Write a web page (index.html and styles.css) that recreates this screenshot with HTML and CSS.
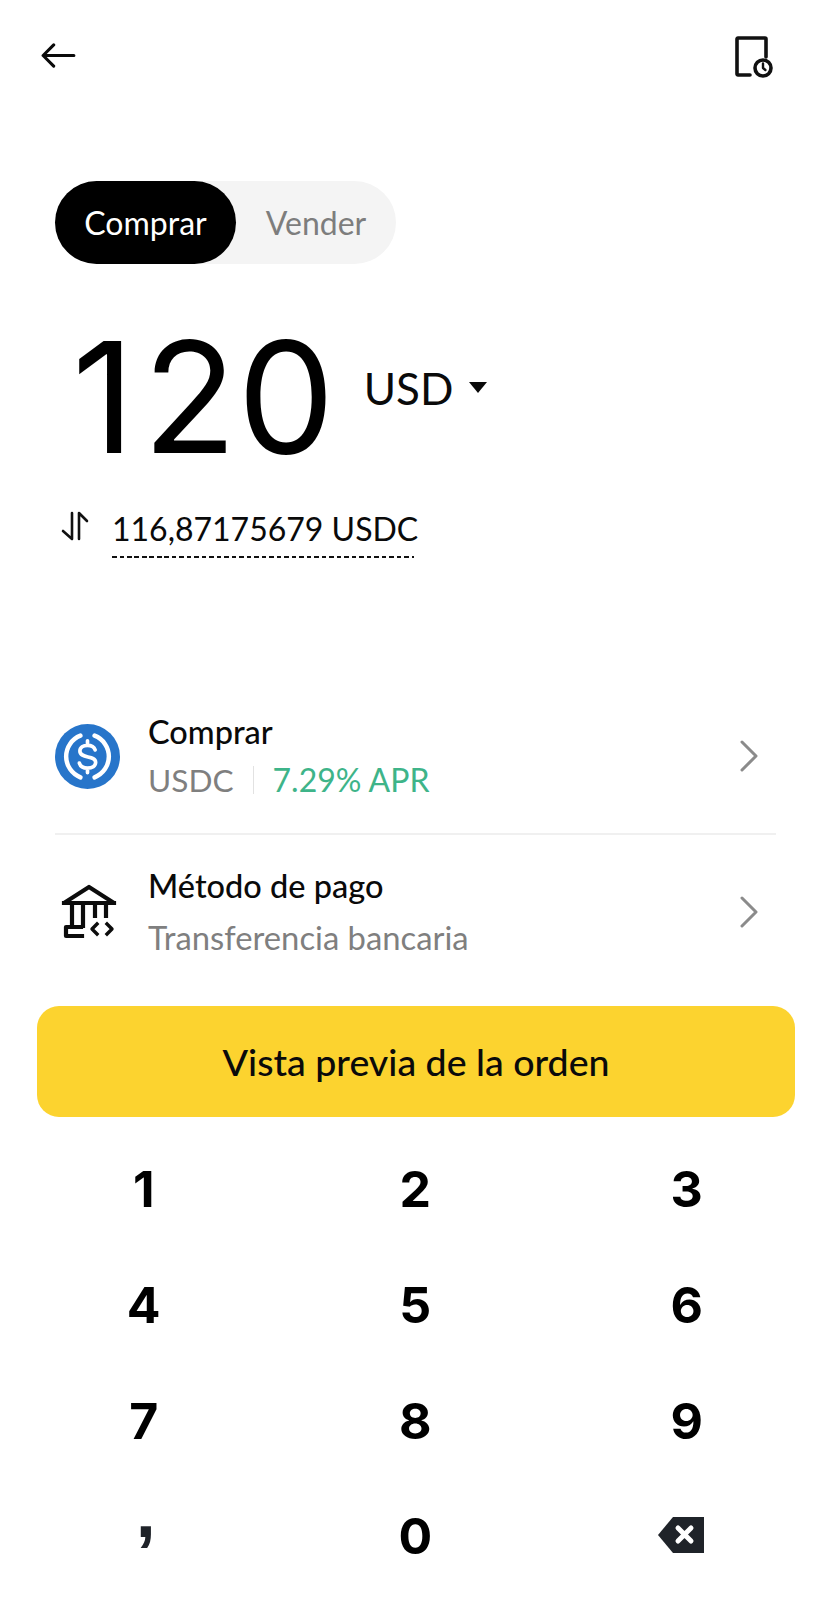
FILE: index.html
```html
<!DOCTYPE html>
<html lang="es">
<head>
<meta charset="utf-8">
<title>Comprar</title>
<link rel="stylesheet" href="styles.css">
</head>
<body>
<main class="screen">
  <header class="top">
    <svg class="back" viewBox="0 0 36 26" fill="none" stroke="#0a0a0a" stroke-width="3.2" stroke-linecap="round" stroke-linejoin="round"><path d="M34 13H2M13 2 2 13l11 11"/></svg>
    <svg class="history" viewBox="0 0 38 42" fill="none" stroke="#111" stroke-width="3.6" stroke-linecap="round" stroke-linejoin="round"><path d="M15 39H3a1 1 0 0 1-1-1V3a1 1 0 0 1 1-1h27a1 1 0 0 1 1 1v18"/><circle cx="28" cy="32" r="8"/><path d="M28 27.500V32l2.400 2" stroke-width="2.400"/></svg>
  </header>

  <div class="toggle">
    <span class="tab tab-on">Comprar</span>
    <span class="tab tab-off">Vender</span>
  </div>

  <div class="amount">
    <span class="value">1<span class="value-rest">20</span></span>
    <span class="currency">USD</span>
    <span class="caret"></span>
  </div>

  <div class="convert">
    <svg class="swap" viewBox="0 0 28 30" fill="none" stroke="#111" stroke-width="2.600" stroke-linecap="round" stroke-linejoin="round"><path d="M11 2v26M2 20l9 8M18 28V2l8 8"/></svg>
    <div class="conv-text">
      <span class="converted">116,87175679 USDC</span>
      <i class="dash"></i>
    </div>
  </div>

  <section class="rows">
    <div class="row row-first">
      <svg class="coin" viewBox="0 0 64 64"><circle cx="32" cy="32" r="32" fill="#2775ca"/><g fill="none" stroke="#fff" stroke-linecap="round"><path d="M25 11.500a22 22 0 0 0 0 41M39 11.500a22 22 0 0 1 0 41" stroke-width="4.400"/><path d="M39.500 25.500c-1-3-4-4.500-7.500-4.500-4 0-7.500 2-7.500 5.700 0 8 15.500 3.500 15.500 11 0 3.800-3.500 5.800-8 5.800-4 0-7-1.800-8-5M32 16.500V21M32 43.500V48" stroke-width="3.600"/></g></svg>
      <div class="info">
        <div class="title">Comprar</div>
        <div class="sub"><span>USDC</span><i class="sep"></i><span class="apr">7.29% APR</span></div>
      </div>
      <svg class="chev" viewBox="0 0 20 32" fill="none" stroke="#8b8b8b" stroke-width="3" stroke-linecap="round" stroke-linejoin="round"><path d="M3 2l14 14L3 30"/></svg>
    </div>
    <div class="row row-second">
      <svg class="bank" viewBox="0 0 56 56" fill="none" stroke="#0c0c0c" stroke-width="4.200" stroke-linecap="square" stroke-linejoin="round"><path d="M3 19 28 3l25 16zM3 19h50"/><path d="M11 20v22M22 20v22M34 20v12M45 20v12M20 43H5v9h16"/><path d="M36 40l-5 5 5 5M46 40l5 5-5 5" stroke-width="3.400"/></svg>
      <div class="info">
        <div class="title">Método de pago</div>
        <div class="sub sub-wide">Transferencia bancaria</div>
      </div>
      <svg class="chev" viewBox="0 0 20 32" fill="none" stroke="#8b8b8b" stroke-width="3" stroke-linecap="round" stroke-linejoin="round"><path d="M3 2l14 14L3 30"/></svg>
    </div>
  </section>

  <div class="cta">Vista previa de la orden</div>

  <section class="keypad">
    <span class="key">1</span><span class="key">2</span><span class="key">3</span>
    <span class="key">4</span><span class="key">5</span><span class="key">6</span>
    <span class="key">7</span><span class="key">8</span><span class="key">9</span>
    <span class="key"><span class="comma">,</span></span><span class="key">0</span>
    <span class="key"><svg class="del" viewBox="0 0 46 36"><path d="M15 0h31v36H15L0 18z" fill="#1f2329"/><path d="M20 11l13 13M33 11 20 24" stroke="#fff" stroke-width="5" stroke-linecap="round"/></svg></span>
  </section>
</main>
</body>
</html>
```

FILE: styles.css
```css
* { box-sizing: border-box; }
html, body { margin: 0; padding: 0; background: #fff; }
body { font-family: "Lato", "Open Sans", sans-serif; color: #0a0a0a; }
.screen { width: 832px; height: 1600px; overflow: hidden; }

.top { display: flex; justify-content: space-between; align-items: flex-start; height: 76px; padding: 36px 59px 0 41px; }
.back { width: 35px; height: 25px; margin-top: 7px; }
.history { width: 38px; height: 42px; }

.toggle { display: flex; width: 341px; height: 83px; margin: 105px 0 0 55px; background: #f4f4f4; border-radius: 42px; font-size: 32px; }
.tab { display: flex; align-items: center; justify-content: center; }
.tab-on { width: 181px; background: #000; color: #fff; border-radius: 42px; }
.tab-off { flex: 1; color: #7d7d7d; }

.amount { display: flex; align-items: flex-start; height: 170px; margin: 48px 0 0 72px; }
.value { font-family: "Inter", sans-serif; font-size: 154px; font-weight: 400; line-height: 170px; color: #000; }
.value-rest { margin-left: 8px; letter-spacing: 1px; }
.currency { font-size: 44px; line-height: 54px; margin: 49px 0 0 28px; }
.caret { width: 0; height: 0; margin: 70px 0 0 16px; border-left: 9px solid transparent; border-right: 9px solid transparent; border-top: 11px solid #0a0a0a; }

.convert { display: flex; align-items: flex-start; margin: 29px 0 0 61px; }
.swap { width: 28px; height: 30px; }
.conv-text { margin-left: 23px; }
.converted { display: block; margin-top: -1px; font-size: 32px; line-height: 38px; }
.dash { display: block; width: 302px; height: 2px; margin-top: 8px; background: repeating-linear-gradient(90deg, #111 0 4.500px, transparent 4.500px 7.500px); }

.rows { margin: 128px 56px 0 55px; }
.row { display: flex; align-items: center; }
.row-first { height: 149px; padding-bottom: 7px; border-bottom: 2px solid #f0f0f0; }
.row-second { height: 154px; }
.coin { width: 65px; height: 65px; flex: none; margin-right: 28px; }
.bank { width: 56px; height: 56px; flex: none; margin: 0 31px 0 6px; }
.info { flex: 1; }
.title { font-size: 32.500px; line-height: 36px; font-weight: 500; }
.sub { display: flex; align-items: center; margin-top: 12px; font-size: 31.600px; line-height: 36px; color: #7f7f7f; }
.sub-wide { margin-top: 16px; font-size: 32.800px; }
.sep { width: 1px; height: 28px; margin: 0 19px; background: #e2e2e2; }
.apr { color: #3eb489; font-size: 32px; }
.chev { width: 20px; height: 32px; flex: none; margin-right: 17px; }

.cta { display: flex; align-items: center; justify-content: center; height: 111px; margin: 17px 37px 0; background: #fcd32f; border-radius: 22px; font-size: 37.500px; font-weight: 500; }

.keypad { display: grid; grid-template-columns: repeat(3, 271.500px); grid-auto-rows: 115.700px; margin: 14.500px 0 0 8px; }
.key { display: flex; align-items: center; justify-content: center; font-family: "Inter", sans-serif; font-size: 50px; font-weight: 700; color: #000; }
.comma { margin: 0 0 48px 4px; font-family: "Liberation Sans", sans-serif; font-size: 72px; line-height: 72px; color: #1f2329; }
.del { width: 46px; height: 36px; margin: 0 11px 2px 0; }
```
